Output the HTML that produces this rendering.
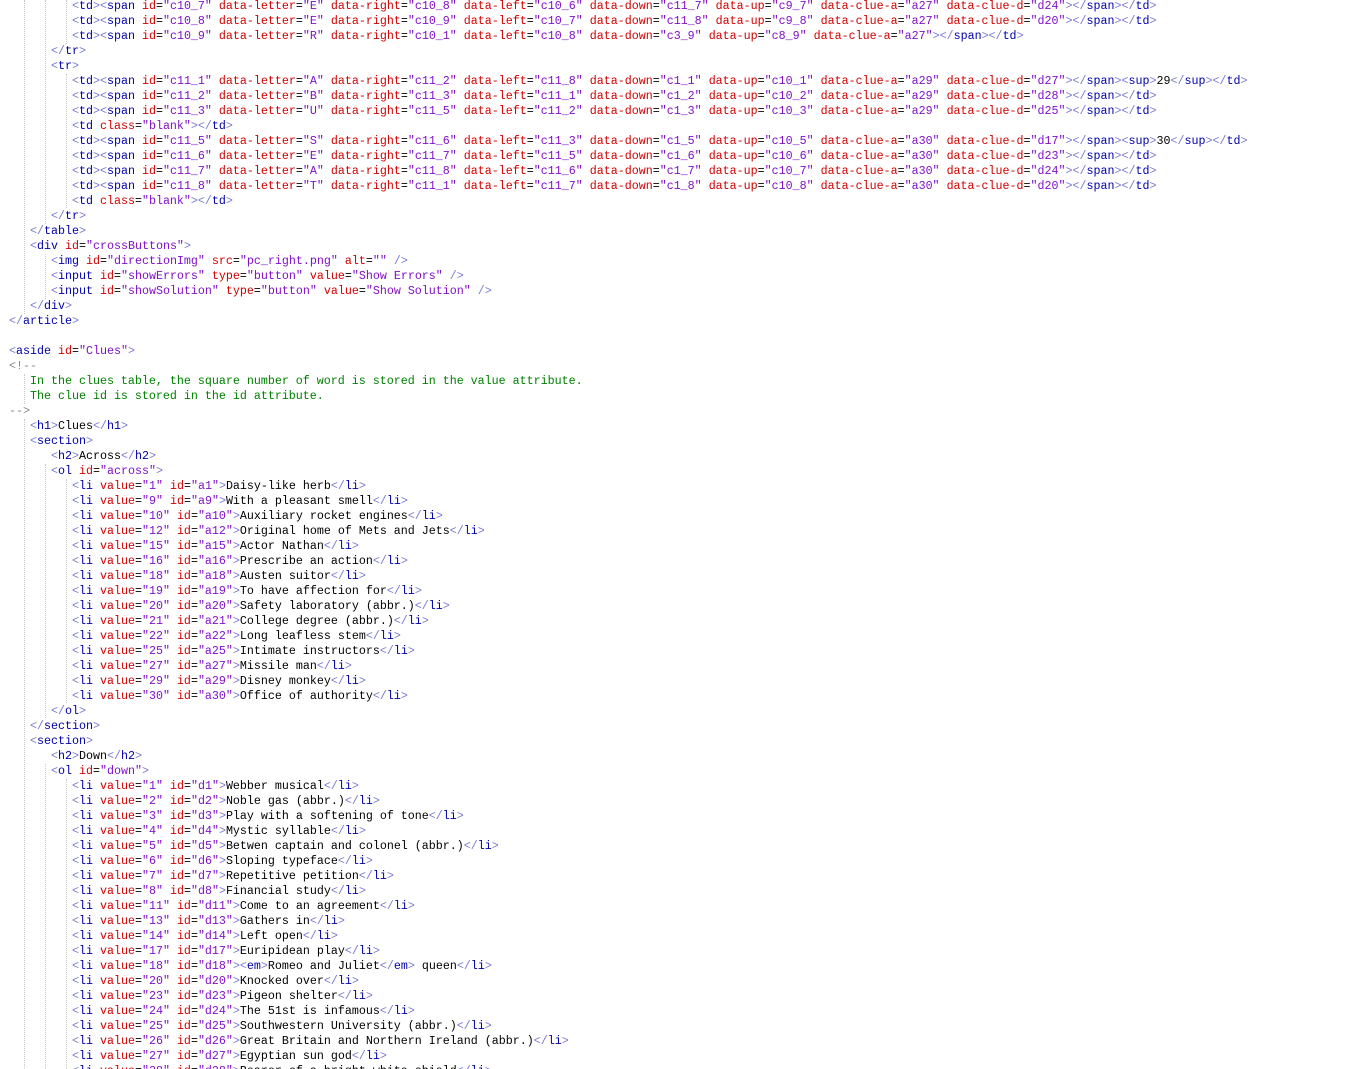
<!DOCTYPE html>
<html><head><meta charset="utf-8"><style>
html,body{margin:0;padding:0;background:#fff;width:1346px;height:1069px;overflow:hidden;position:relative}
.c{position:absolute;left:0;top:-1px;font-family:"Liberation Mono","Courier New",monospace;font-size:11.67px;line-height:15px;color:#000}
.c div{height:15px;padding-left:9px;white-space:pre}
i,b,u,s,em{font-style:normal;font-weight:normal;text-decoration:none}
i{color:#7a7ad0}b{color:#0000a8}u{color:#d00000}s{color:#8010c8}em{color:#008000}
.gr{color:#888}
.g{position:absolute;width:0;border-left:1px dotted #c8c8c8}
</style></head><body>
<div class="g" style="left:24px;top:0;height:314px"></div>
<div class="g" style="left:45px;top:0;height:224px"></div>
<div class="g" style="left:66px;top:0;height:44px"></div>
<div class="g" style="left:66px;top:74px;height:134px"></div>
<div class="g" style="left:45px;top:254px;height:45px"></div>
<div class="g" style="left:24px;top:374px;height:30px"></div>
<div class="g" style="left:24px;top:419px;height:650px"></div>
<div class="g" style="left:45px;top:464px;height:254px"></div>
<div class="g" style="left:66px;top:479px;height:224px"></div>
<div class="g" style="left:45px;top:764px;height:305px"></div>
<div class="g" style="left:66px;top:779px;height:290px"></div>
<div class="c">
<div>         <i>&lt;</i><b>td</b><i>&gt;&lt;</i><b>span</b> <u>id</u>=<s>"c10_7"</s> <u>data-letter</u>=<s>"E"</s> <u>data-right</u>=<s>"c10_8"</s> <u>data-left</u>=<s>"c10_6"</s> <u>data-down</u>=<s>"c11_7"</s> <u>data-up</u>=<s>"c9_7"</s> <u>data-clue-a</u>=<s>"a27"</s> <u>data-clue-d</u>=<s>"d24"</s><i>&gt;&lt;/</i><b>span</b><i>&gt;&lt;/</i><b>td</b><i>&gt;</i></div>
<div>         <i>&lt;</i><b>td</b><i>&gt;&lt;</i><b>span</b> <u>id</u>=<s>"c10_8"</s> <u>data-letter</u>=<s>"E"</s> <u>data-right</u>=<s>"c10_9"</s> <u>data-left</u>=<s>"c10_7"</s> <u>data-down</u>=<s>"c11_8"</s> <u>data-up</u>=<s>"c9_8"</s> <u>data-clue-a</u>=<s>"a27"</s> <u>data-clue-d</u>=<s>"d20"</s><i>&gt;&lt;/</i><b>span</b><i>&gt;&lt;/</i><b>td</b><i>&gt;</i></div>
<div>         <i>&lt;</i><b>td</b><i>&gt;&lt;</i><b>span</b> <u>id</u>=<s>"c10_9"</s> <u>data-letter</u>=<s>"R"</s> <u>data-right</u>=<s>"c10_1"</s> <u>data-left</u>=<s>"c10_8"</s> <u>data-down</u>=<s>"c3_9"</s> <u>data-up</u>=<s>"c8_9"</s> <u>data-clue-a</u>=<s>"a27"</s><i>&gt;&lt;/</i><b>span</b><i>&gt;&lt;/</i><b>td</b><i>&gt;</i></div>
<div>      <i>&lt;/</i><b>tr</b><i>&gt;</i></div>
<div>      <i>&lt;</i><b>tr</b><i>&gt;</i></div>
<div>         <i>&lt;</i><b>td</b><i>&gt;&lt;</i><b>span</b> <u>id</u>=<s>"c11_1"</s> <u>data-letter</u>=<s>"A"</s> <u>data-right</u>=<s>"c11_2"</s> <u>data-left</u>=<s>"c11_8"</s> <u>data-down</u>=<s>"c1_1"</s> <u>data-up</u>=<s>"c10_1"</s> <u>data-clue-a</u>=<s>"a29"</s> <u>data-clue-d</u>=<s>"d27"</s><i>&gt;&lt;/</i><b>span</b><i>&gt;&lt;</i><b>sup</b><i>&gt;</i>29<i>&lt;/</i><b>sup</b><i>&gt;&lt;/</i><b>td</b><i>&gt;</i></div>
<div>         <i>&lt;</i><b>td</b><i>&gt;&lt;</i><b>span</b> <u>id</u>=<s>"c11_2"</s> <u>data-letter</u>=<s>"B"</s> <u>data-right</u>=<s>"c11_3"</s> <u>data-left</u>=<s>"c11_1"</s> <u>data-down</u>=<s>"c1_2"</s> <u>data-up</u>=<s>"c10_2"</s> <u>data-clue-a</u>=<s>"a29"</s> <u>data-clue-d</u>=<s>"d28"</s><i>&gt;&lt;/</i><b>span</b><i>&gt;&lt;/</i><b>td</b><i>&gt;</i></div>
<div>         <i>&lt;</i><b>td</b><i>&gt;&lt;</i><b>span</b> <u>id</u>=<s>"c11_3"</s> <u>data-letter</u>=<s>"U"</s> <u>data-right</u>=<s>"c11_5"</s> <u>data-left</u>=<s>"c11_2"</s> <u>data-down</u>=<s>"c1_3"</s> <u>data-up</u>=<s>"c10_3"</s> <u>data-clue-a</u>=<s>"a29"</s> <u>data-clue-d</u>=<s>"d25"</s><i>&gt;&lt;/</i><b>span</b><i>&gt;&lt;/</i><b>td</b><i>&gt;</i></div>
<div>         <i>&lt;</i><b>td</b> <u>class</u>=<s>"blank"</s><i>&gt;&lt;/</i><b>td</b><i>&gt;</i></div>
<div>         <i>&lt;</i><b>td</b><i>&gt;&lt;</i><b>span</b> <u>id</u>=<s>"c11_5"</s> <u>data-letter</u>=<s>"S"</s> <u>data-right</u>=<s>"c11_6"</s> <u>data-left</u>=<s>"c11_3"</s> <u>data-down</u>=<s>"c1_5"</s> <u>data-up</u>=<s>"c10_5"</s> <u>data-clue-a</u>=<s>"a30"</s> <u>data-clue-d</u>=<s>"d17"</s><i>&gt;&lt;/</i><b>span</b><i>&gt;&lt;</i><b>sup</b><i>&gt;</i>30<i>&lt;/</i><b>sup</b><i>&gt;&lt;/</i><b>td</b><i>&gt;</i></div>
<div>         <i>&lt;</i><b>td</b><i>&gt;&lt;</i><b>span</b> <u>id</u>=<s>"c11_6"</s> <u>data-letter</u>=<s>"E"</s> <u>data-right</u>=<s>"c11_7"</s> <u>data-left</u>=<s>"c11_5"</s> <u>data-down</u>=<s>"c1_6"</s> <u>data-up</u>=<s>"c10_6"</s> <u>data-clue-a</u>=<s>"a30"</s> <u>data-clue-d</u>=<s>"d23"</s><i>&gt;&lt;/</i><b>span</b><i>&gt;&lt;/</i><b>td</b><i>&gt;</i></div>
<div>         <i>&lt;</i><b>td</b><i>&gt;&lt;</i><b>span</b> <u>id</u>=<s>"c11_7"</s> <u>data-letter</u>=<s>"A"</s> <u>data-right</u>=<s>"c11_8"</s> <u>data-left</u>=<s>"c11_6"</s> <u>data-down</u>=<s>"c1_7"</s> <u>data-up</u>=<s>"c10_7"</s> <u>data-clue-a</u>=<s>"a30"</s> <u>data-clue-d</u>=<s>"d24"</s><i>&gt;&lt;/</i><b>span</b><i>&gt;&lt;/</i><b>td</b><i>&gt;</i></div>
<div>         <i>&lt;</i><b>td</b><i>&gt;&lt;</i><b>span</b> <u>id</u>=<s>"c11_8"</s> <u>data-letter</u>=<s>"T"</s> <u>data-right</u>=<s>"c11_1"</s> <u>data-left</u>=<s>"c11_7"</s> <u>data-down</u>=<s>"c1_8"</s> <u>data-up</u>=<s>"c10_8"</s> <u>data-clue-a</u>=<s>"a30"</s> <u>data-clue-d</u>=<s>"d20"</s><i>&gt;&lt;/</i><b>span</b><i>&gt;&lt;/</i><b>td</b><i>&gt;</i></div>
<div>         <i>&lt;</i><b>td</b> <u>class</u>=<s>"blank"</s><i>&gt;&lt;/</i><b>td</b><i>&gt;</i></div>
<div>      <i>&lt;/</i><b>tr</b><i>&gt;</i></div>
<div>   <i>&lt;/</i><b>table</b><i>&gt;</i></div>
<div>   <i>&lt;</i><b>div</b> <u>id</u>=<s>"crossButtons"</s><i>&gt;</i></div>
<div>      <i>&lt;</i><b>img</b> <u>id</u>=<s>"directionImg"</s> <u>src</u>=<s>"pc_right.png"</s> <u>alt</u>=<s>""</s> <i>/&gt;</i></div>
<div>      <i>&lt;</i><b>input</b> <u>id</u>=<s>"showErrors"</s> <u>type</u>=<s>"button"</s> <u>value</u>=<s>"Show Errors"</s> <i>/&gt;</i></div>
<div>      <i>&lt;</i><b>input</b> <u>id</u>=<s>"showSolution"</s> <u>type</u>=<s>"button"</s> <u>value</u>=<s>"Show Solution"</s> <i>/&gt;</i></div>
<div>   <i>&lt;/</i><b>div</b><i>&gt;</i></div>
<div><i>&lt;/</i><b>article</b><i>&gt;</i></div>
<div> </div>
<div><i>&lt;</i><b>aside</b> <u>id</u>=<s>"Clues"</s><i>&gt;</i></div>
<div><span class="gr">&lt;!--</span></div>
<div>   <em>In the clues table, the square number of word is stored in the value attribute.</em></div>
<div>   <em>The clue id is stored in the id attribute.</em></div>
<div><span class="gr">--&gt;</span></div>
<div>   <i>&lt;</i><b>h1</b><i>&gt;</i>Clues<i>&lt;/</i><b>h1</b><i>&gt;</i></div>
<div>   <i>&lt;</i><b>section</b><i>&gt;</i></div>
<div>      <i>&lt;</i><b>h2</b><i>&gt;</i>Across<i>&lt;/</i><b>h2</b><i>&gt;</i></div>
<div>      <i>&lt;</i><b>ol</b> <u>id</u>=<s>"across"</s><i>&gt;</i></div>
<div>         <i>&lt;</i><b>li</b> <u>value</u>=<s>"1"</s> <u>id</u>=<s>"a1"</s><i>&gt;</i>Daisy-like herb<i>&lt;/</i><b>li</b><i>&gt;</i></div>
<div>         <i>&lt;</i><b>li</b> <u>value</u>=<s>"9"</s> <u>id</u>=<s>"a9"</s><i>&gt;</i>With a pleasant smell<i>&lt;/</i><b>li</b><i>&gt;</i></div>
<div>         <i>&lt;</i><b>li</b> <u>value</u>=<s>"10"</s> <u>id</u>=<s>"a10"</s><i>&gt;</i>Auxiliary rocket engines<i>&lt;/</i><b>li</b><i>&gt;</i></div>
<div>         <i>&lt;</i><b>li</b> <u>value</u>=<s>"12"</s> <u>id</u>=<s>"a12"</s><i>&gt;</i>Original home of Mets and Jets<i>&lt;/</i><b>li</b><i>&gt;</i></div>
<div>         <i>&lt;</i><b>li</b> <u>value</u>=<s>"15"</s> <u>id</u>=<s>"a15"</s><i>&gt;</i>Actor Nathan<i>&lt;/</i><b>li</b><i>&gt;</i></div>
<div>         <i>&lt;</i><b>li</b> <u>value</u>=<s>"16"</s> <u>id</u>=<s>"a16"</s><i>&gt;</i>Prescribe an action<i>&lt;/</i><b>li</b><i>&gt;</i></div>
<div>         <i>&lt;</i><b>li</b> <u>value</u>=<s>"18"</s> <u>id</u>=<s>"a18"</s><i>&gt;</i>Austen suitor<i>&lt;/</i><b>li</b><i>&gt;</i></div>
<div>         <i>&lt;</i><b>li</b> <u>value</u>=<s>"19"</s> <u>id</u>=<s>"a19"</s><i>&gt;</i>To have affection for<i>&lt;/</i><b>li</b><i>&gt;</i></div>
<div>         <i>&lt;</i><b>li</b> <u>value</u>=<s>"20"</s> <u>id</u>=<s>"a20"</s><i>&gt;</i>Safety laboratory (abbr.)<i>&lt;/</i><b>li</b><i>&gt;</i></div>
<div>         <i>&lt;</i><b>li</b> <u>value</u>=<s>"21"</s> <u>id</u>=<s>"a21"</s><i>&gt;</i>College degree (abbr.)<i>&lt;/</i><b>li</b><i>&gt;</i></div>
<div>         <i>&lt;</i><b>li</b> <u>value</u>=<s>"22"</s> <u>id</u>=<s>"a22"</s><i>&gt;</i>Long leafless stem<i>&lt;/</i><b>li</b><i>&gt;</i></div>
<div>         <i>&lt;</i><b>li</b> <u>value</u>=<s>"25"</s> <u>id</u>=<s>"a25"</s><i>&gt;</i>Intimate instructors<i>&lt;/</i><b>li</b><i>&gt;</i></div>
<div>         <i>&lt;</i><b>li</b> <u>value</u>=<s>"27"</s> <u>id</u>=<s>"a27"</s><i>&gt;</i>Missile man<i>&lt;/</i><b>li</b><i>&gt;</i></div>
<div>         <i>&lt;</i><b>li</b> <u>value</u>=<s>"29"</s> <u>id</u>=<s>"a29"</s><i>&gt;</i>Disney monkey<i>&lt;/</i><b>li</b><i>&gt;</i></div>
<div>         <i>&lt;</i><b>li</b> <u>value</u>=<s>"30"</s> <u>id</u>=<s>"a30"</s><i>&gt;</i>Office of authority<i>&lt;/</i><b>li</b><i>&gt;</i></div>
<div>      <i>&lt;/</i><b>ol</b><i>&gt;</i></div>
<div>   <i>&lt;/</i><b>section</b><i>&gt;</i></div>
<div>   <i>&lt;</i><b>section</b><i>&gt;</i></div>
<div>      <i>&lt;</i><b>h2</b><i>&gt;</i>Down<i>&lt;/</i><b>h2</b><i>&gt;</i></div>
<div>      <i>&lt;</i><b>ol</b> <u>id</u>=<s>"down"</s><i>&gt;</i></div>
<div>         <i>&lt;</i><b>li</b> <u>value</u>=<s>"1"</s> <u>id</u>=<s>"d1"</s><i>&gt;</i>Webber musical<i>&lt;/</i><b>li</b><i>&gt;</i></div>
<div>         <i>&lt;</i><b>li</b> <u>value</u>=<s>"2"</s> <u>id</u>=<s>"d2"</s><i>&gt;</i>Noble gas (abbr.)<i>&lt;/</i><b>li</b><i>&gt;</i></div>
<div>         <i>&lt;</i><b>li</b> <u>value</u>=<s>"3"</s> <u>id</u>=<s>"d3"</s><i>&gt;</i>Play with a softening of tone<i>&lt;/</i><b>li</b><i>&gt;</i></div>
<div>         <i>&lt;</i><b>li</b> <u>value</u>=<s>"4"</s> <u>id</u>=<s>"d4"</s><i>&gt;</i>Mystic syllable<i>&lt;/</i><b>li</b><i>&gt;</i></div>
<div>         <i>&lt;</i><b>li</b> <u>value</u>=<s>"5"</s> <u>id</u>=<s>"d5"</s><i>&gt;</i>Betwen captain and colonel (abbr.)<i>&lt;/</i><b>li</b><i>&gt;</i></div>
<div>         <i>&lt;</i><b>li</b> <u>value</u>=<s>"6"</s> <u>id</u>=<s>"d6"</s><i>&gt;</i>Sloping typeface<i>&lt;/</i><b>li</b><i>&gt;</i></div>
<div>         <i>&lt;</i><b>li</b> <u>value</u>=<s>"7"</s> <u>id</u>=<s>"d7"</s><i>&gt;</i>Repetitive petition<i>&lt;/</i><b>li</b><i>&gt;</i></div>
<div>         <i>&lt;</i><b>li</b> <u>value</u>=<s>"8"</s> <u>id</u>=<s>"d8"</s><i>&gt;</i>Financial study<i>&lt;/</i><b>li</b><i>&gt;</i></div>
<div>         <i>&lt;</i><b>li</b> <u>value</u>=<s>"11"</s> <u>id</u>=<s>"d11"</s><i>&gt;</i>Come to an agreement<i>&lt;/</i><b>li</b><i>&gt;</i></div>
<div>         <i>&lt;</i><b>li</b> <u>value</u>=<s>"13"</s> <u>id</u>=<s>"d13"</s><i>&gt;</i>Gathers in<i>&lt;/</i><b>li</b><i>&gt;</i></div>
<div>         <i>&lt;</i><b>li</b> <u>value</u>=<s>"14"</s> <u>id</u>=<s>"d14"</s><i>&gt;</i>Left open<i>&lt;/</i><b>li</b><i>&gt;</i></div>
<div>         <i>&lt;</i><b>li</b> <u>value</u>=<s>"17"</s> <u>id</u>=<s>"d17"</s><i>&gt;</i>Euripidean play<i>&lt;/</i><b>li</b><i>&gt;</i></div>
<div>         <i>&lt;</i><b>li</b> <u>value</u>=<s>"18"</s> <u>id</u>=<s>"d18"</s><i>&gt;&lt;</i><b>em</b><i>&gt;</i>Romeo and Juliet<i>&lt;/</i><b>em</b><i>&gt;</i> queen<i>&lt;/</i><b>li</b><i>&gt;</i></div>
<div>         <i>&lt;</i><b>li</b> <u>value</u>=<s>"20"</s> <u>id</u>=<s>"d20"</s><i>&gt;</i>Knocked over<i>&lt;/</i><b>li</b><i>&gt;</i></div>
<div>         <i>&lt;</i><b>li</b> <u>value</u>=<s>"23"</s> <u>id</u>=<s>"d23"</s><i>&gt;</i>Pigeon shelter<i>&lt;/</i><b>li</b><i>&gt;</i></div>
<div>         <i>&lt;</i><b>li</b> <u>value</u>=<s>"24"</s> <u>id</u>=<s>"d24"</s><i>&gt;</i>The 51st is infamous<i>&lt;/</i><b>li</b><i>&gt;</i></div>
<div>         <i>&lt;</i><b>li</b> <u>value</u>=<s>"25"</s> <u>id</u>=<s>"d25"</s><i>&gt;</i>Southwestern University (abbr.)<i>&lt;/</i><b>li</b><i>&gt;</i></div>
<div>         <i>&lt;</i><b>li</b> <u>value</u>=<s>"26"</s> <u>id</u>=<s>"d26"</s><i>&gt;</i>Great Britain and Northern Ireland (abbr.)<i>&lt;/</i><b>li</b><i>&gt;</i></div>
<div>         <i>&lt;</i><b>li</b> <u>value</u>=<s>"27"</s> <u>id</u>=<s>"d27"</s><i>&gt;</i>Egyptian sun god<i>&lt;/</i><b>li</b><i>&gt;</i></div>
<div>         <i>&lt;</i><b>li</b> <u>value</u>=<s>"28"</s> <u>id</u>=<s>"d28"</s><i>&gt;</i>Bearer of a bright white shield<i>&lt;/</i><b>li</b><i>&gt;</i></div>
</div>
</body></html>
